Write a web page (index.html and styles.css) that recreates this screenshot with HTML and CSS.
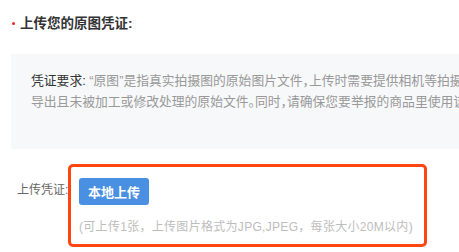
FILE: index.html
```html
<!DOCTYPE html>
<html lang="zh-CN">
<head>
<meta charset="utf-8">
<link rel="stylesheet" href="styles.css">
</head>
<body>
<div class="page">
  <h3 class="title"><span class="dot"></span>上传您的原图凭证:</h3>
  <div class="notice">
    <p class="notice-text"><span class="notice-key">凭证要求:</span> “原图”是指真实拍摄图的原始图片文件，上传时需要提供相机等拍摄设备<br>导出且未被加工或修改处理的原始文件。同时，请确保您要举报的商品里使用该图片。</p>
  </div>
  <div class="upload-row">
    <span class="upload-label">上传凭证:</span>
    <div class="upload-box">
      <button class="upload-btn" type="button">本地上传</button>
      <p class="upload-hint">(可上传1张，上传图片格式为JPG,JPEG，每张大小20M以内)</p>
    </div>
  </div>
</div>
</body>
</html>
```
FILE: styles.css
```css
html, body {
  margin: 0;
  padding: 0;
  background: #fff;
  overflow: hidden;
}
body {
  font-family: "Liberation Sans", "Noto Sans CJK SC", sans-serif;
  width: 459px;
  height: 252px;
}
.page {
  padding-top: 14px;
}
.title {
  margin: 0 0 0 12px;
  display: flex;
  align-items: center;
  font-size: 13.5px;
  line-height: 20px;
  font-weight: bold;
  color: #333;
}
.dot {
  width: 3px;
  height: 3px;
  border-radius: 50%;
  background: #f5222d;
  margin-right: 5px;
  margin-top: -1px;
}
.notice {
  margin: 20px 0 0 11px;
  width: 560px;
  height: 95px;
  box-sizing: border-box;
  padding: 16px 20px;
  background: #f7f8fa;
}
.notice-text {
  margin: 0;
  white-space: nowrap;
  font-size: 12.8px;
  line-height: 21px;
  color: #999;
  font-feature-settings: "halt";
}
.notice-key {
  color: #333;
}
.upload-row {
  display: flex;
  align-items: flex-start;
  margin-top: 15px;
  padding-left: 17px;
}
.upload-label {
  width: 51px;
  white-space: nowrap;
  font-size: 12px;
  line-height: 16px;
  color: #666;
  margin-top: 18px;
}
.upload-box {
  width: 359px;
  height: 83px;
  box-sizing: border-box;
  border: 3px solid #ff4612;
  border-radius: 5px;
  padding: 11px 8px 0;
}
.upload-btn {
  display: block;
  width: 70px;
  height: 27px;
  border: 0;
  border-radius: 3px;
  background: #4a90e2;
  color: #fff;
  font-family: inherit;
  font-size: 13px;
  font-weight: bold;
  padding: 0;
}
.upload-hint {
  margin: 14px 0 0;
  font-size: 12px;
  line-height: 16px;
  color: #bdbdbd;
  white-space: nowrap;
  letter-spacing: 0.3px;
}
```
